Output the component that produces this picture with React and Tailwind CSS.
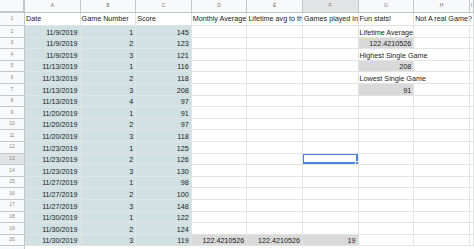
import React from "react";

const TEAL = "bg-[#d0e0e3]";
const GRAY = "bg-[#d9d9d9]";

const scores = [
  ["11/9/2019", 1, 145],
  ["11/9/2019", 2, 123],
  ["11/9/2019", 3, 121],
  ["11/13/2019", 1, 116],
  ["11/13/2019", 2, 118],
  ["11/13/2019", 3, 208],
  ["11/13/2019", 4, 97],
  ["11/20/2019", 1, 91],
  ["11/20/2019", 2, 97],
  ["11/20/2019", 3, 118],
  ["11/23/2019", 1, 125],
  ["11/23/2019", 2, 126],
  ["11/23/2019", 3, 130],
  ["11/27/2019", 1, 98],
  ["11/27/2019", 2, 100],
  ["11/27/2019", 3, 148],
  ["11/30/2019", 1, 122],
  ["11/30/2019", 2, 124],
  ["11/30/2019", 3, 119],
];

const cols = ["A", "B", "C", "D", "E", "F", "G", "H", "I"];

// sheet contents keyed "row:col" (header texts as far as they show in the cell)
const extra = {
  "1:0": { t: "Date" },
  "1:1": { t: "Game Number" },
  "1:2": { t: "Score" },
  "1:3": { t: "Monthly Average" },
  "1:4": { t: "Lifetime avg to th" },
  "1:5": { t: "Games played in" },
  "1:6": { t: "Fun stats!" },
  "1:7": { t: "Not A real Game?", spill: true },
  "2:6": { t: "Lifetime Average" },
  "3:6": { t: "122.4210526", num: true, bg: GRAY },
  "4:6": { t: "Highest Single Game", spill: true },
  "5:6": { t: "208", num: true, bg: GRAY },
  "6:6": { t: "Lowest Single Game", spill: true },
  "7:6": { t: "91", num: true, bg: GRAY },
  "20:3": { t: "122.4210526", num: true, bg: GRAY },
  "20:4": { t: "122.4210526", num: true, bg: GRAY },
  "20:5": { t: "19", num: true, bg: GRAY },
};

function cellFor(r, c) {
  if (r >= 2 && c <= 2) {
    const row = scores[r - 2];
    return { t: String(row[c]), num: true, bg: TEAL };
  }
  return extra[`${r}:${c}`] || {};
}

function Cell({ r, c }) {
  const cell = cellFor(r, c);
  const selected = r === 13 && c === 5;
  return (
    <div
      className={`relative flex items-end border-r border-b border-[#e2e3e3] ${cell.bg || "bg-white"} ${
        cell.spill ? "border-r-transparent" : "overflow-hidden"
      } ${r === 1 ? "pb-[2px]" : "pb-0"}`}
    >
      {cell.t && (
        <span
          className={`relative z-10 whitespace-nowrap text-[7.2px] leading-[8px] text-[#222222] ${
            cell.num ? "ml-auto pr-[2px]" : "pl-[1px]"
          }`}
        >
          {cell.t}
        </span>
      )}
      {selected && (
        <div className="absolute -left-px -top-px z-20 h-[calc(100%+1px)] w-[calc(100%+1px)] border-2 border-[#4a84d8]">
          <div className="absolute -bottom-[3px] -right-[3px] h-[4px] w-[4px] border border-white bg-[#4a84d8]" />
        </div>
      )}
    </div>
  );
}

export default function App() {
  const rows = Array.from({ length: 20 }, (_, i) => i + 1);
  return (
    <div className="h-[249px] w-[474px] overflow-hidden bg-white font-['Liberation_Sans',Arial,sans-serif]">
      <div className="grid grid-cols-[25px_repeat(8,55.6px)_1fr] grid-rows-[12.5px_13.5px_repeat(19,11.6px)_1fr] h-full">
        {/* corner */}
        <div className="border-r-2 border-b-2 border-[#c4c7c5] bg-[#f8f9fa]" />
        {cols.map((l, i) => (
          <div
            key={l}
            className={`flex items-center justify-center border-r border-b border-[#c4c7c5] text-[5px] text-[#777777] ${
              i === 5 ? "bg-[#e1e3e5]" : "bg-[#f8f9fa]"
            }`}
          >
            {l}
          </div>
        ))}
        {rows.map(r => (
          <React.Fragment key={r}>
            <div
              className={`flex items-center justify-center border-r border-b border-[#c4c7c5] text-[5px] text-[#888888] ${
                r === 13 ? "bg-[#e1e3e5]" : "bg-[#f8f9fa]"
              }`}
            >
              {r}
            </div>
            {cols.map((_, c) => <Cell key={c} r={r} c={c} />)}
          </React.Fragment>
        ))}
        <div className="border-r border-[#c4c7c5] bg-[#f8f9fa]" />
      </div>
    </div>
  );
}
